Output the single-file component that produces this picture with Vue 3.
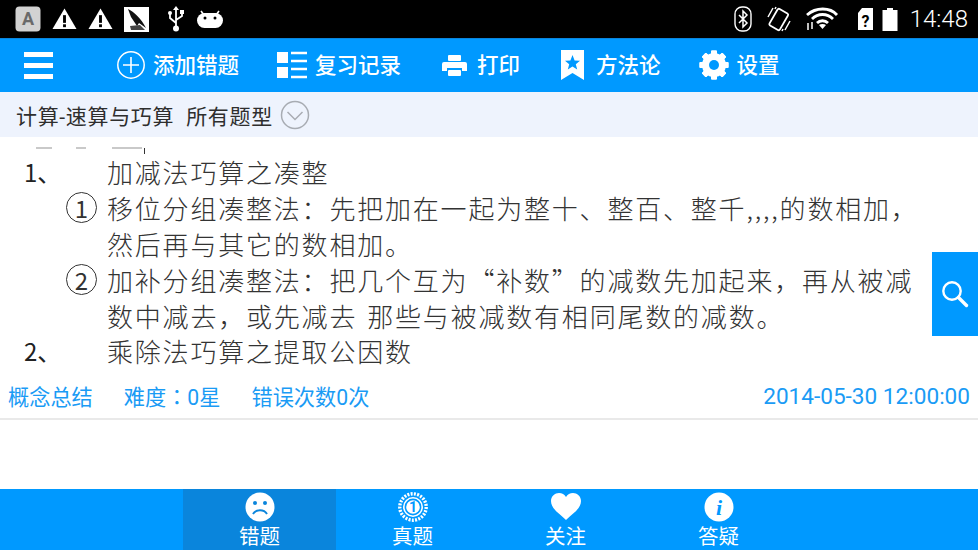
<script setup>
const lines = [
  { key: 1, no: '1、', text: '加减法巧算之凑整' },
  { key: 2, mark: '1', text: '移位分组凑整法：先把加在一起为整十、整百、整千,,,,的数相加，' },
  { key: 3, text: '然后再与其它的数相加。' },
  { key: 4, mark: '2', text: '加补分组凑整法：把几个互为“补数”的减数先加起来，再从被减' },
  { key: 5, text: '数中减去，或先减去 那些与被减数有相同尾数的减数。' },
  { key: 6, no: '2、', text: '乘除法巧算之提取公因数' }
]
const gearTeeth = [0, 45, 90, 135, 180, 225, 270, 315]
</script>

<template>
  <div class="page">
    <div class="status">
      <div class="status-left">
        <svg width="26" height="26" viewBox="0 0 26 26">
          <rect x="0.5" y="0.5" width="25" height="25" rx="4" fill="#d2d2d2" />
          <text x="13" y="19" text-anchor="middle" class="a-letter">A</text>
        </svg>
        <svg v-for="n in 2" :key="n" width="25" height="24" viewBox="0 0 26 24">
          <path d="M13 1 L25.5 22.5 H0.5 Z" fill="#fff" />
          <rect x="11.5" y="8" width="3" height="8" fill="#000" />
          <rect x="11.5" y="17.5" width="3" height="3" fill="#000" />
        </svg>
        <svg width="25" height="25" viewBox="0 0 25 25">
          <rect width="25" height="25" fill="#fff" />
          <path d="M4 2 C10 5 17 11 22 21 L15 16 L13 19 L7 10 Z" fill="#111" />
          <path d="M6 19 L16 18 L21 23 L7 23 Z" fill="#444" />
        </svg>
        <svg class="usb" width="18" height="26" viewBox="0 0 18 26">
          <path d="M9 3 V22 M9 17 L3 12 V8 M9 14 L15 10 V7" stroke="#fff" stroke-width="1.8" fill="none" />
          <path d="M9 0 L12 4 H6 Z" fill="#fff" />
          <circle cx="9" cy="22.5" r="3" fill="#fff" />
          <circle cx="3" cy="7" r="2" fill="#fff" />
          <rect x="13" y="4" width="4" height="4" fill="#fff" />
        </svg>
        <svg width="28" height="22" viewBox="0 0 28 22">
          <path d="M5 3 L8 7 M23 3 L20 7" stroke="#fff" stroke-width="1.6" />
          <rect x="1" y="5" width="26" height="15" rx="7.5" fill="#fff" />
          <circle cx="9" cy="10" r="1.5" fill="#000" />
          <circle cx="19" cy="10" r="1.5" fill="#000" />
        </svg>
      </div>
      <div class="status-right">
        <svg width="18" height="26" viewBox="0 0 18 26">
          <rect x="1" y="1" width="16" height="24" rx="7" fill="none" stroke="#fff" stroke-width="1.4" />
          <path d="M5 9 L13 17 L9 21 V5 L13 9 L5 17" fill="none" stroke="#fff" stroke-width="1.5" />
        </svg>
        <svg class="vibrate" width="26" height="26" viewBox="0 0 26 26">
          <rect x="7" y="4" width="12" height="19" rx="1.5" transform="rotate(30 13 13)" fill="none" stroke="#fff" stroke-width="1.8" />
          <path d="M2 11 L7 2 M10 1 L9 3 M24 15 L19 24 M16 25 L17 23" stroke="#fff" stroke-width="1.5" fill="none" />
        </svg>
        <svg class="wifi" width="34" height="24" viewBox="0 0 34 24">
          <path d="M2 8 C11 0 25 0 32 8 M7 12 C13 6 22 6 28 12 M12 16 C15 13 20 13 23 16" fill="none" stroke="#fff" stroke-width="2.8" />
          <path d="M14 18 C16 16.5 19 16.5 21 18 L17.5 22 Z" fill="#fff" />
          <path d="M3 16 V23 M7 15 V22" stroke="#fff" stroke-width="1.5" />
        </svg>
        <svg class="sim" width="17" height="23" viewBox="0 0 17 23">
          <path d="M5 0 H16 V22 H1 V5 Z" fill="#fff" />
          <text x="8.5" y="19" text-anchor="middle" class="q-mark">?</text>
        </svg>
        <svg class="battery" width="16" height="23" viewBox="0 0 16 23">
          <rect x="5" y="0" width="6" height="3" fill="#fff" />
          <rect x="0.5" y="2" width="15" height="21" fill="#fff" />
        </svg>
        <span class="clock">14:48</span>
      </div>
    </div>

    <div class="toolbar">
      <svg class="menu" width="29" height="27" viewBox="0 0 29 27">
        <rect width="29" height="5" fill="#fff" />
        <rect y="11" width="29" height="5" fill="#fff" />
        <rect y="22" width="29" height="5" fill="#fff" />
      </svg>
      <div class="tool">
        <svg class="tool-icon" width="30" height="30" viewBox="0 0 30 30">
          <circle cx="15" cy="15" r="13.2" fill="none" stroke="#fff" stroke-width="1.5" />
          <path d="M15 7 V23 M7 15 H23" stroke="#fff" stroke-width="1.6" />
        </svg>
        <span>添加错题</span>
      </div>
      <div class="tool">
        <svg class="tool-icon" width="30" height="30" viewBox="0 0 30 30">
          <rect x="0" y="2" width="11" height="11" fill="#fff" />
          <rect x="0" y="17" width="11" height="11" fill="#fff" />
          <path d="M14 3 H30 M14 11 H30 M14 19 H30 M14 27 H30" stroke="#fff" stroke-width="2.6" />
        </svg>
        <span>复习记录</span>
      </div>
      <div class="tool">
        <svg class="tool-icon" width="30" height="30" viewBox="0 0 30 30">
          <rect x="9" y="5" width="13" height="6" rx="1" fill="#fff" />
          <path d="M5 12 H26 Q28 12 28 14 V21 H23 V18 H8 V21 H3 V14 Q3 12 5 12 Z" fill="#fff" />
          <rect x="9" y="20" width="13" height="6" rx="1" fill="#fff" />
        </svg>
        <span>打印</span>
      </div>
      <div class="tool">
        <svg class="tool-icon" width="30" height="30" viewBox="0 0 30 30">
          <path fill-rule="evenodd" d="M3 0 H26 V30 L14.5 23 L3 30 Z M14.5 5 L12.4 10.5 L7 10.7 L11.2 14.2 L9.8 19.5 L14.5 16.5 L19.2 19.5 L17.8 14.2 L22 10.7 L16.6 10.5 Z" fill="#fff" />
        </svg>
        <span>方法论</span>
      </div>
      <div class="tool">
        <svg class="tool-icon" width="30" height="30" viewBox="0 0 30 30">
          <rect v-for="a in gearTeeth" :key="a" x="12" y="0.5" width="6" height="29" rx="1" fill="#fff" :transform="`rotate(${a} 15 15)`" />
          <circle cx="15" cy="15" r="9.5" fill="none" stroke="#fff" stroke-width="5" />
          <circle cx="15" cy="15" r="5" fill="#0099ff" />
        </svg>
        <span>设置</span>
      </div>
    </div>

    <div class="subbar">
      <span>计算-速算与巧算</span>
      <span class="type">所有题型</span>
      <svg class="chevron" width="30" height="30" viewBox="0 0 30 30">
        <circle cx="15" cy="15" r="13.5" fill="none" stroke="#a8acb3" stroke-width="1.5" />
        <path d="M7.5 12 L15 19.5 L22.5 12" fill="none" stroke="#a8acb3" stroke-width="1.5" />
      </svg>
    </div>

    <div class="content">
      <div class="cut">
        <i class="dash d1"></i><i class="dash d2"></i><i class="dash d3"></i><i class="tick"></i>
      </div>
      <div v-for="l in lines" :key="l.key" class="line">
        <span v-if="l.no" class="no">{{ l.no }}</span>
        <span v-if="l.mark" class="mark">{{ l.mark }}</span>
        <span class="text">{{ l.text }}</span>
      </div>
      <div class="meta">
        <span>概念总结</span>
        <span>难度<span class="colon">：</span>0星</span>
        <span>错误次数0次</span>
        <span class="date">2014-05-30 12:00:00</span>
      </div>
    </div>

    <div class="search">
      <svg width="30" height="30" viewBox="0 0 30 30">
        <circle cx="12" cy="12" r="8.7" fill="none" stroke="#fff" stroke-width="2.4" />
        <path d="M18.5 18.5 L26.5 26.5" stroke="#fff" stroke-width="3.4" stroke-linecap="round" />
      </svg>
    </div>

    <div class="tabs">
      <div class="tab active">
        <svg width="30" height="30" viewBox="0 0 30 30">
          <circle cx="15" cy="15" r="14.5" fill="#fff" />
          <circle cx="10" cy="11" r="2" fill="#0a85dc" />
          <circle cx="20" cy="11" r="2" fill="#0a85dc" />
          <path d="M8 22 C11 17 19 17 22 22" fill="none" stroke="#0a85dc" stroke-width="2" />
        </svg>
        <span>错题</span>
      </div>
      <div class="tab">
        <svg width="30" height="30" viewBox="0 0 30 30">
          <circle cx="15" cy="15" r="13.2" fill="none" stroke="#fff" stroke-width="3.4" stroke-dasharray="2 1.3" />
          <circle cx="15" cy="15" r="10" fill="#fff" />
          <circle cx="15" cy="15" r="7.6" fill="none" stroke="#0099ff" stroke-width="1.6" />
          <text x="15" y="20" text-anchor="middle" class="medal-no">1</text>
        </svg>
        <span>真题</span>
      </div>
      <div class="tab">
        <svg width="32" height="30" viewBox="0 0 32 30">
          <path d="M16 28 C10 22 1 17 1 9 C1 4 5 1 9 1 C12 1 14.5 2.5 16 5 C17.5 2.5 20 1 23 1 C27 1 31 4 31 9 C31 17 22 22 16 28 Z" fill="#fff" />
        </svg>
        <span>关注</span>
      </div>
      <div class="tab">
        <svg width="30" height="30" viewBox="0 0 30 30">
          <circle cx="15" cy="15" r="14.5" fill="#fff" />
          <text x="15" y="23" text-anchor="middle" class="info">i</text>
        </svg>
        <span>答疑</span>
      </div>
    </div>
  </div>
</template>

<style>
html, body {
  margin: 0;
  background: #fff;
}
</style>

<style scoped>
.page {
  position: relative;
  width: 978px;
  height: 550px;
  display: flex;
  flex-direction: column;
  overflow: hidden;
  font-family: Roboto, "Noto Sans CJK SC", sans-serif;
  background: #fff;
}

.status {
  height: 38px;
  flex: none;
  background: #000;
  display: flex;
  align-items: center;
  justify-content: space-between;
  padding: 0 10px 0 15px;
}
.status-left, .status-right {
  display: flex;
  align-items: center;
}
.status-left {
  gap: 11px;
}
.status-left .usb { margin-left: 7px; }
.status-right .vibrate { margin-left: 14px; }
.status-right .wifi { margin-left: 13px; }
.status-right .sim { margin-left: 18px; }
.status-right .battery { margin-left: 8px; }
.clock {
  margin-left: 12px;
  color: #fff;
  font-size: 24px;
  font-weight: 300;
}
.a-letter {
  font: 700 18px Roboto, sans-serif;
  fill: #6a6a6a;
}
.q-mark {
  font: 700 16px Roboto, sans-serif;
  fill: #000;
}

.toolbar {
  height: 54px;
  flex: none;
  box-sizing: border-box;
  background: #0099ff;
  display: flex;
  align-items: center;
  padding: 0 0 1px 24px;
  gap: 38px;
  border-top: 1px solid #0a85dc;
  color: #fff;
  font-size: 21.5px;
  font-weight: 500;
}
.menu {
  margin-right: 25px;
}
.tool {
  display: flex;
  align-items: center;
  gap: 8px;
}
.menu + .tool {
  gap: 7px;
}
.tool span {
  margin-top: -3px;
}
.tool-icon {
  flex: none;
}

.subbar {
  height: 45px;
  flex: none;
  box-sizing: border-box;
  display: flex;
  align-items: center;
  padding-left: 16px;
  background: #eef3fd;
  color: #2e2e2e;
  font-size: 21px;
  letter-spacing: 0.67px;
}
.type {
  margin-left: 12px;
}
.chevron {
  margin-left: 7px;
}

.content {
  flex: 1;
  display: flex;
  flex-direction: column;
}
.cut {
  height: 17px;
  display: flex;
  align-items: flex-start;
  padding: 10px 0 0 36px;
  box-sizing: border-box;
}
.dash {
  display: block;
  height: 2px;
  background: #c9c9c9;
}
.d1 { width: 16px; }
.d2 { width: 10px; margin-left: 24px; }
.d3 { width: 30px; margin-left: 26px; }
.tick {
  display: block;
  width: 1px;
  height: 6px;
  margin: 1px 0 0 2px;
  background: #333;
}
.line {
  position: relative;
  height: 35.8px;
  padding-left: 107px;
  display: flex;
  align-items: center;
  white-space: pre;
  font-family: "Noto Sans CJK SC", sans-serif;
  font-weight: 300;
}
.text {
  font-size: 26px;
  letter-spacing: 1.8px;
  word-spacing: 2.5px;
  color: #333;
}
.no {
  position: absolute;
  left: 24px;
  font-size: 24px;
  font-weight: 400;
  color: #222;
}
.mark {
  position: absolute;
  left: 66px;
  width: 31px;
  height: 31px;
  box-sizing: border-box;
  border: 1.5px solid #333;
  border-radius: 50%;
  display: flex;
  align-items: center;
  justify-content: center;
  font-size: 24px;
  font-weight: 400;
  color: #333;
}
.meta {
  margin-top: 4px;
  height: 47px;
  padding: 0 8px;
  display: flex;
  align-items: center;
  gap: 31px;
  border-bottom: 2px solid #e9e9e9;
  color: #1a9bf5;
  font-size: 21.2px;
  box-sizing: border-box;
}
.colon {
  font-family: "Noto Sans CJK TC", sans-serif;
}
.date {
  margin: 3px 0 0 auto;
  font-size: 22.6px;
}

.search {
  position: absolute;
  top: 252px;
  right: 0;
  width: 46px;
  height: 84px;
  background: #0099ff;
  display: flex;
  align-items: center;
  justify-content: center;
}

.tabs {
  height: 61px;
  flex: none;
  box-sizing: border-box;
  background: #0099ff;
  display: flex;
  padding-left: 183px;
}
.tab {
  width: 153px;
  display: flex;
  flex-direction: column;
  align-items: center;
  padding-top: 3px;
  box-sizing: border-box;
  color: #fff;
  font-size: 20.5px;
  line-height: 28px;
}
.tab span {
  margin-top: 1px;
}
.tab svg {
  display: block;
  flex: none;
}
.tab.active {
  background: #0a85dc;
}
.medal-no {
  font: 700 14px Roboto, sans-serif;
  fill: #0099ff;
}
.info {
  font: italic 700 22px "Liberation Serif", serif;
  fill: #0099ff;
}
</style>
